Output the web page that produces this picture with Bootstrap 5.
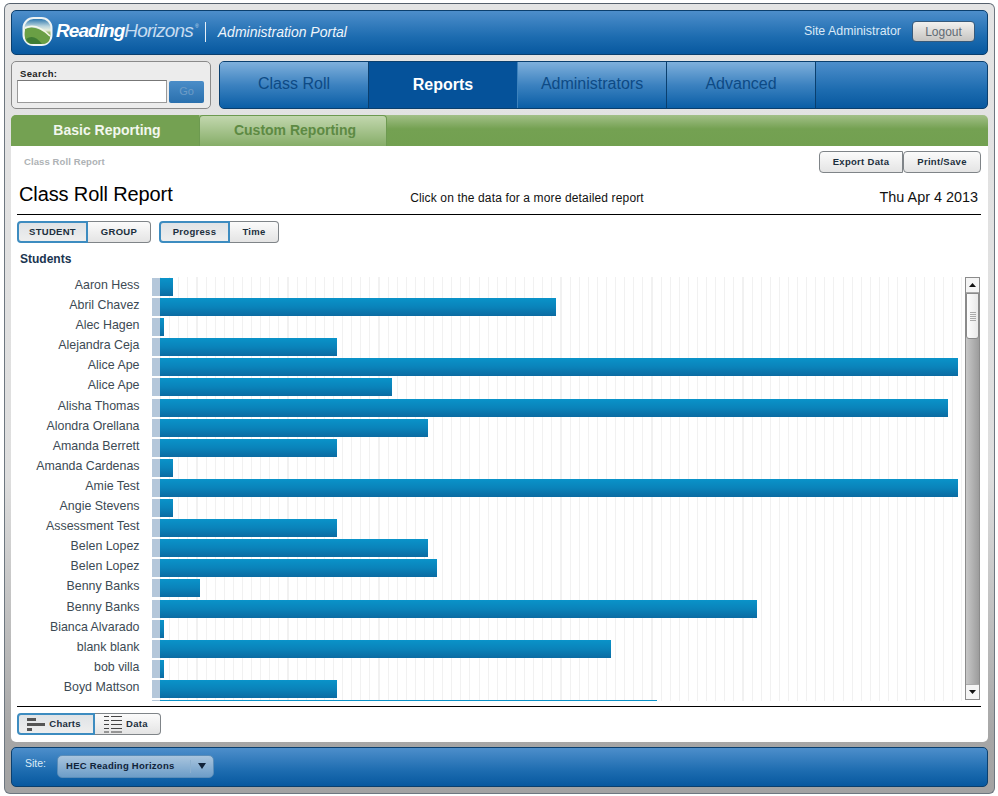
<!DOCTYPE html>
<html lang="en"><head><meta charset="utf-8"><title>Class Roll Report</title>
<link href="https://cdn.jsdelivr.net/npm/bootstrap@5.3.0/dist/css/bootstrap.min.css" rel="stylesheet">
<style>
html,body{margin:0;background:#fff;font-family:"Liberation Sans",Arial,sans-serif;overflow:hidden}
.frame{box-sizing:border-box;width:991px;height:791px;margin:3px 0 0 4px;padding:6px;border:1px solid #6e7780;border-top-color:#56606c;border-radius:6px;background:linear-gradient(#e4e4e4 0,#dedede 60%,#a6a6a6 93%,#a3a3a3 100%);display:flex;flex-direction:column}
.bluebar{background:linear-gradient(#4d8ecb 0,#1d6cb0 60%,#07589f 100%);border:1px solid #0a3f6e;border-radius:5px}
.head{height:45px;padding:0 12px 2px 10px;color:#fff}
.logo-word{font-size:19px;letter-spacing:-.8px;font-style:italic;color:#c6dcf0;margin-left:3px}
.logo-word b{color:#fff;letter-spacing:-.95px}
.logo-word sup{font-size:5px;top:-9px;margin-left:2px}
.portal{font-size:14px;font-style:italic;color:#eef5fb;border-left:1px solid #e6eff7;padding:1px 0 1px 12px;margin-left:7px;line-height:18px}
.who{font-size:12.4px;color:#d9e9f7;margin-right:11px}
.logout{width:63px;height:21px;padding:0;font-size:12px;line-height:18px;color:#5f6b74;border:1px solid #36597a;border-radius:4px;background:linear-gradient(#f2f1ef,#c6c4c1)}
.midrow{height:48px;margin-top:6px;gap:8px}
.searchbox{width:200px;border:1px solid #8a8a8a;border-radius:5px;background:#ececec;padding:6px 6px 0 5px}
.searchbox label{display:block;font-size:9.5px;font-weight:700;line-height:11px;color:#222;letter-spacing:.35px;margin:0 0 1px 3px}
.searchbox input{width:150px;height:23px;border:1px solid #9a9a9a;border-top-color:#777;background:#fff;padding:0;display:block;border-radius:0}
.go{width:35px;height:22px;margin-left:2px;padding:0;font-size:11px;color:#6e9cc6;border:0;border-radius:2px;background:linear-gradient(#4b8dc8,#2a70ae)}
.mainnav{flex:1;overflow:hidden;padding:0}
.mainnav a{display:flex;align-items:center;justify-content:center;width:149px;height:100%;padding-bottom:3px;font-size:16px;color:#0d4a85;text-decoration:none;background:linear-gradient(#7fb0dc 0,#3c82c0 50%,#0a5ea6 100%);border-right:1px solid #0a3f6e}
.mainnav a.on{background:#05529a;color:#fff;font-weight:700;border-right-color:#3d82bd;padding-bottom:1px}
.subtabs{height:31px;margin-top:6px;border-radius:5px 5px 0 0;background:linear-gradient(#a3c088 0,#74a152 45%,#72a050 100%);overflow:hidden}
.subtabs a{display:flex;align-items:center;justify-content:center;height:100%;text-decoration:none;font-size:14px;font-weight:700;padding:0 0 2px 4px}
.subtabs .a1{width:188px;background:#74a152;color:#f2f7ee;padding-bottom:0}
.subtabs .a2{width:188px;color:#5d8a43;background:linear-gradient(#c2d7ae,#86ad68);border:1px solid #6d9a50;border-bottom:0;border-radius:4px 4px 0 0}
.sheet{flex:1;background:#fff;padding:5px 6px 0 6px;border-radius:0 0 5px 5px;min-height:0}
.crumb{font-size:9.5px;font-weight:700;color:#aeb2b5;padding-left:7px;letter-spacing:.1px}
.gbtn{height:22px;padding:0;font-size:9.5px;font-weight:700;letter-spacing:.3px;color:#1c2f3d;border:1px solid #7f8488;background:linear-gradient(#fbfbfb,#e4e4e4);border-radius:4px;display:inline-flex;align-items:center;justify-content:center}
.gbtn.on{background:linear-gradient(#dfe3e6,#eeeeee);border:2px solid #3d8cc0}
.gl{border-radius:4px 0 0 4px;border-right:0}
.gr{border-radius:0 4px 4px 0;border-left:0}
.titlerow{height:42px;border-bottom:1px solid #000;margin-top:0;padding:9px 3px 0 2px}
.ttl{font-size:20px;line-height:24px;color:#000;width:300px;letter-spacing:-.12px}
.hint{font-size:12px;letter-spacing:.14px;color:#111;width:240px;text-align:center;padding:7px 0 0 0;margin-left:88px;white-space:nowrap}
.dt{font-size:14.4px;color:#111;padding-top:5px;margin-left:auto}
.toggles{margin-top:6px;gap:8px}
.stud{font-size:12px;font-weight:700;color:#1a3550;margin:9px 0 0 3px;line-height:14px}
.chartwrap{height:424px;margin-top:11px;overflow:hidden;position:relative}
.plot{padding-right:16px;height:424px;overflow:hidden}
.rw{height:20.1px;display:flex;align-items:flex-start}
.nm{width:122.5px;flex:none;text-align:right;font-size:12.4px;line-height:17px;color:#3c4a54;white-space:nowrap}
.track{margin-left:12.5px;flex:1;height:20.1px;display:flex;background:repeating-linear-gradient(90deg,#fff 0,#fff 8px,#f1f1f1 8px,#f1f1f1 9.1px)}
.stub{width:8px;height:18px;margin-top:1px;background:#b4c7da;flex:none}
.barx{height:18px;margin-top:1px;background:linear-gradient(#0a93c9 0,#0a83ba 50%,#0b6ba2 100%)}
.sbar{position:absolute;right:2px;top:0;width:15px;height:423px;background:linear-gradient(90deg,#c8c8c8,#9c9c9c);border:1px solid #8b8b8b;display:flex;flex-direction:column}
.sarrow{height:15px;background:#f4f4f4;flex:none;display:flex;align-items:center;justify-content:center;border-bottom:1px solid #aaa}
.sthumb{height:46px;border-radius:0 0 3px 3px;border:1px solid #8a8a8a;background:linear-gradient(90deg,#fdfdfd,#e9e9e9);display:flex;flex-direction:column;align-items:center;justify-content:center;gap:1px;flex:none}
.sthumb i{display:block;width:6px;height:1px;background:#aaa}
.botline{border-top:1px solid #000;padding-top:6px;margin-top:5px;margin-right:1px}
.foot{height:40px;margin-top:5px;padding:0 10px 2px 13px;color:#dcebf7}
.foot .sl{font-size:10.5px;margin-top:-4px}
.sitepick{width:157px;height:23px;margin-left:11px;border-radius:5px;background:linear-gradient(#a9c5de,#6d9dc8);display:flex;align-items:center;padding:0 7px 0 8px;font-size:9.5px;font-weight:700;color:#10233a;border:1px solid #5a8db9;letter-spacing:.25px}
.sitepick svg{margin-left:auto}
.sitepick u{display:block;width:1px;height:13px;background:#8cb0cf;margin-left:16px}
.sitepick span{white-space:nowrap}
.btn-charts{width:78px;border-right:2px solid #3d8cc0;gap:4px;letter-spacing:.2px;padding-right:4px}
.btn-data{width:66px;gap:4px;padding-right:3px}
</style></head><body>
<div class="frame">
 <div class="bluebar head d-flex align-items-center">
  <svg width="31" height="31" viewBox="0 0 31 31"><defs><linearGradient id="sk" x1="0" y1="0" x2="0" y2="1"><stop offset="0" stop-color="#1c6ca8"/><stop offset=".3" stop-color="#b6d2dc"/><stop offset=".45" stop-color="#e8eee0"/><stop offset=".55" stop-color="#98b868"/><stop offset="1" stop-color="#4b8438"/></linearGradient></defs><rect x="1.5" y="2" width="28" height="27" rx="10" fill="url(#sk)" stroke="#eef3f3" stroke-width="2"/><path d="M3 13C12 9 19 13 28 21V22Q27 28 20 28H11Q4 28 3 22Z" fill="#6a9f45"/><path d="M3 12C11 8 20 12 28 20" fill="none" stroke="#f4f7ea" stroke-width="1.5"/><path d="M4 23Q12 17 20 28H11Q6 28 4 23Z" fill="#3f7c35"/></svg>
  <span class="logo-word"><b>Reading</b>Horizons<sup>®</sup></span>
  <span class="portal">Administration Portal</span>
  <span class="ms-auto who">Site Administrator</span>
  <button class="btn logout" type="button">Logout</button>
 </div>
 <div class="d-flex midrow">
  <div class="searchbox">
   <label for="q">Search:</label>
   <div class="d-flex align-items-center"><input id="q" type="text"><button class="btn go" type="button">Go</button></div>
  </div>
  <nav class="bluebar mainnav d-flex">
   <a href="#">Class Roll</a><a href="#" class="on">Reports</a><a href="#">Administrators</a><a href="#">Advanced</a>
  </nav>
 </div>
 <div class="subtabs d-flex"><a href="#" class="a1">Basic Reporting</a><a href="#" class="a2">Custom Reporting</a></div>
 <div class="sheet d-flex flex-column">
  <div class="d-flex justify-content-between align-items-center" style="margin-right:1px">
   <span class="crumb">Class Roll Report</span>
   <div class="d-flex"><button class="btn gbtn gl" style="width:84px;border-right:1px solid #7f8488" type="button">Export Data</button><button class="btn gbtn" style="width:78px;border-radius:4px" type="button">Print/Save</button></div>
  </div>
  <div class="titlerow d-flex" style="margin-right:1px"><span class="ttl">Class Roll Report</span><span class="hint">Click on the data for a more detailed report</span><span class="dt">Thu Apr 4 2013</span></div>
  <div class="d-flex toggles">
   <div class="d-flex"><button class="btn gbtn on gl" style="width:71px;border-right:2px solid #3d8cc0" type="button">STUDENT</button><button class="btn gbtn gr" style="width:63px" type="button">GROUP</button></div>
   <div class="d-flex"><button class="btn gbtn on gl" style="width:71px;border-right:2px solid #3d8cc0" type="button">Progress</button><button class="btn gbtn gr" style="width:49px" type="button">Time</button></div>
  </div>
  <div class="stud">Students</div>
  <div class="chartwrap">
   <div class="plot" id="plot"></div>
   <div class="sbar">
    <div class="sarrow"><svg width="7" height="4"><path d="M3.5 0L7 4H0Z" fill="#111"/></svg></div>
    <div class="sthumb"><i></i><i></i><i></i><i></i><i></i></div>
    <div class="flex-grow-1"></div>
    <div class="sarrow" style="border-top:1px solid #aaa;border-bottom:0"><svg width="7" height="4"><path d="M3.5 4L7 0H0Z" fill="#111"/></svg></div>
   </div>
  </div>
  <div class="botline d-flex">
   <button class="btn gbtn on gl btn-charts" type="button"><svg width="18" height="15" viewBox="0 0 18 15"><rect x="0" y="1" width="9" height="3" fill="#555"/><rect x="0" y="6" width="18" height="3" fill="#555"/><rect x="0" y="11" width="5" height="3" fill="#555"/></svg>Charts</button>
   <button class="btn gbtn gr btn-data" type="button"><svg width="18" height="18" viewBox="0 0 18 18" stroke="#444" stroke-width="1"><path d="M0 1.5H5M7 1.5H18M0 5.5H5M7 5.5H18M0 9.5H5M7 9.5H18M0 13.5H5M7 13.5H18M0 17H5M7 17H18"/></svg>Data</button>
  </div>
 </div>
 <div class="bluebar foot d-flex align-items-center">
  <span class="sl">Site:</span>
  <div class="sitepick"><span>HEC Reading Horizons</span><u></u><svg width="8" height="6"><path d="M0 0H8L4 6Z" fill="#10233a"/></svg></div>
 </div>
</div>
<script>
var d=[["Aaron Hess",13],["Abril Chavez",396],["Alec Hagen",4],["Alejandra Ceja ",177],["Alice Ape",798],["Alice Ape",232],["Alisha Thomas",788],["Alondra Orellana",268],["Amanda Berrett",177],["Amanda Cardenas",13],["Amie Test",798],["Angie Stevens",13],["Assessment Test",177],["Belen Lopez",268],["Belen Lopez",277],["Benny Banks",40],["Benny Banks",597],["Bianca Alvarado",4],["blank blank",451],["bob villa",4],["Boyd Mattson",177],["",497]];
var h="";d.forEach(function(r){h+='<div class="rw"><div class="nm">'+r[0]+'</div><div class="track"><div class="stub"></div><div class="barx" style="width:'+r[1]+'px"></div></div></div>';});
document.getElementById("plot").innerHTML=h;
</script>
<script src="https://cdn.jsdelivr.net/npm/bootstrap@5.3.0/dist/js/bootstrap.bundle.min.js"></script>
</body></html>
